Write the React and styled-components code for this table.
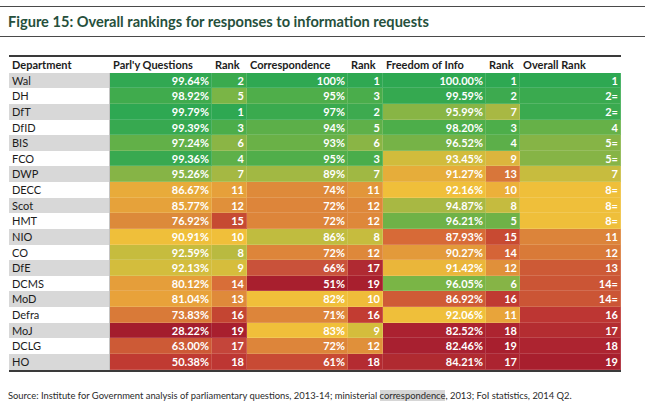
import React from "react";
import styled, { createGlobalStyle } from "styled-components";

const Global = createGlobalStyle`
  html, body { margin: 0; padding: 0; background: #ffffff; }
  body { font-family: Lato, "Open Sans", sans-serif; }
`;

const Page = styled.div`
  width: 645px;
  height: 410px;
  padding-top: 6px;
  box-sizing: border-box;
  overflow: hidden;
`;

const TitleBar = styled.div`
  border-top: 1.5px solid #4a4a4a;
  border-bottom: 1.5px solid #4a4a4a;
  height: 29px;
  display: flex;
  align-items: center;
  padding-left: 8px;
`;

const Title = styled.h1`
  margin: 0;
  font-family: Lato, sans-serif;
  font-weight: 700;
  font-size: 14.6px;
  color: #26503c;
  letter-spacing: 0;
`;

const Grid = styled.div`
  margin: 18px 0 0 9px;
  width: 612px;
  display: grid;
  grid-template-columns: 101px 102px 35px 101px 35px 103px 34px 101px;
  grid-auto-rows: 15.63px;
  border-top: 2px solid #3a3a3a;
  border-bottom: 2px solid #3a3a3a;
`;

const Head = styled.div`
  font-weight: 700;
  font-size: 11px;
  color: #1c1c1c;
  padding-left: ${(p) => p.$pl || 3}px;
  line-height: 15.6px;
  white-space: nowrap;
  height: 16px;
`;

const Dept = styled.div`
  font-size: 11px;
  color: #1c1c1c;
  padding-left: 3px;
  line-height: 15.6px;
  background: ${(p) => (p.$shade ? "#d8d8d8" : "#ffffff")};
  border-right: 1px solid #c4c4c4;
`;

const Val = styled.div`
  font-size: 11px;
  font-weight: 700;
  color: #ffffff;
  text-align: right;
  padding-right: 3px;
  line-height: 15.6px;
  background: ${(p) => p.$bg};
  box-shadow: inset -1px -1px 0 rgba(255, 255, 255, 0.14);
  white-space: nowrap;
`;

const Footer = styled.p`
  margin: 18px 0 0 8px;
  font-size: 9.4px;
  color: #2a2a2a;
  white-space: nowrap;
`;

const Mark = styled.span`
  background: #d6d6d6;
`;

const rows = [
  ["Wal", "99.64%", "#31a852", "2", "#3aaa4e", "100%", "#2fa852", "1", "#2fa852", "100.00%", "#2ea852", "1", "#2ea852", "1", "#2ea852"],
  ["DH", "98.92%", "#40ab4d", "5", "#7ab546", "95%", "#4fae4a", "3", "#4aad4b", "99.59%", "#35a950", "2", "#3daa4f", "2=", "#3aaa4f"],
  ["DfT", "99.79%", "#2ea852", "1", "#2ea852", "97%", "#3aaa4e", "2", "#3daa4f", "95.99%", "#88b545", "7", "#a8b843", "2=", "#3aaa4f"],
  ["DfID", "99.39%", "#37a950", "3", "#4cad4a", "94%", "#5caf49", "5", "#5fb049", "98.20%", "#4dae4a", "3", "#4dae4a", "4", "#66b148"],
  ["BIS", "97.24%", "#62b048", "6", "#8bb545", "93%", "#6ab147", "6", "#8ab545", "96.52%", "#76b347", "4", "#5caf49", "5=", "#86b446"],
  ["FCO", "99.36%", "#38a950", "4", "#5eb049", "95%", "#50ae4a", "3", "#4aad4b", "93.45%", "#d1bc3c", "9", "#dcb53d", "5=", "#86b446"],
  ["DWP", "95.26%", "#86b446", "7", "#a5b843", "89%", "#a2b843", "7", "#a0b843", "91.27%", "#e6ad3a", "13", "#d8763a", "7", "#c7bc3e"],
  ["DECC", "86.67%", "#e8ab3a", "11", "#e6a03a", "74%", "#de8a3a", "11", "#e2963a", "92.16%", "#f0bf3a", "10", "#ecb03a", "8=", "#efbf3a"],
  ["Scot", "85.77%", "#e6a23a", "12", "#e0903a", "72%", "#dd853a", "12", "#de883a", "94.87%", "#a8b843", "8", "#c5bb3f", "8=", "#efbf3a"],
  ["HMT", "76.92%", "#dc8a3a", "15", "#c64a32", "72%", "#dd853a", "12", "#de883a", "96.21%", "#6fb247", "5", "#6fb247", "8=", "#efbf3a"],
  ["NIO", "90.91%", "#efbf3a", "10", "#f0bf3a", "86%", "#c0bc3f", "8", "#c6bc3e", "87.93%", "#d76a37", "15", "#c84a32", "11", "#dc843a"],
  ["CO", "92.59%", "#c6bc3e", "8", "#b9ba40", "72%", "#dd853a", "12", "#de883a", "90.27%", "#e39a3a", "14", "#d56437", "12", "#d97a38"],
  ["DfE", "92.13%", "#d3bd3d", "9", "#d6bd3c", "66%", "#c9523a", "17", "#b02a32", "91.42%", "#eab63a", "12", "#e0903a", "13", "#cd5a36"],
  ["DCMS", "80.12%", "#e59e3a", "14", "#d86e38", "51%", "#a81f2e", "19", "#a81f2e", "96.05%", "#7ab546", "6", "#86b446", "14=", "#cb5535"],
  ["MoD", "81.04%", "#e8a23a", "13", "#df8a3a", "82%", "#f0bf3a", "10", "#efbc3a", "86.92%", "#cf5b36", "16", "#c03a32", "14=", "#cb5535"],
  ["Defra", "73.83%", "#d97a38", "16", "#c44532", "71%", "#dd853a", "16", "#c23c32", "92.06%", "#efbf3a", "11", "#e8a43a", "16", "#bd3633"],
  ["MoJ", "28.22%", "#a31d2d", "19", "#a81f2e", "83%", "#f0bf3a", "9", "#d4bd3c", "82.52%", "#ab2230", "18", "#ad2430", "17", "#b42d31"],
  ["DCLG", "63.00%", "#cd5a36", "17", "#c4453a", "72%", "#dd853a", "12", "#e0903a", "82.46%", "#a82030", "19", "#a81f2e", "18", "#ad2430"],
  ["HO", "50.38%", "#c03a32", "18", "#bd3633", "61%", "#c84a34", "18", "#b42b31", "84.21%", "#b02a30", "17", "#ac2430", "19", "#a81f2e"],
];

const heads = ["Department", "Parl'y Questions", "Rank", "Correspondence", "Rank", "Freedom of Info", "Rank", "Overall Rank"];

export default function App() {
  return (
    <Page>
      <Global />
      <TitleBar>
        <Title>Figure 15: Overall rankings for responses to information requests</Title>
      </TitleBar>
      <Grid>
        {heads.map((h, i) => (
          <Head key={"h" + i}>{h}</Head>
        ))}
        {rows.map((r, ri) => (
          <React.Fragment key={r[0]}>
            <Dept $shade={ri % 2 === 0}>{r[0]}</Dept>
            {[1, 3, 5, 7, 9, 11, 13].map((k) => (
              <Val key={k} $bg={r[k + 1]}>
                {r[k]}
              </Val>
            ))}
          </React.Fragment>
        ))}
      </Grid>
      <Footer>
        Source: Institute for Government analysis of parliamentary questions, 2013-14; ministerial{" "}
        <Mark>correspondence</Mark>, 2013; FoI statistics, 2014 Q2.
      </Footer>
    </Page>
  );
}
